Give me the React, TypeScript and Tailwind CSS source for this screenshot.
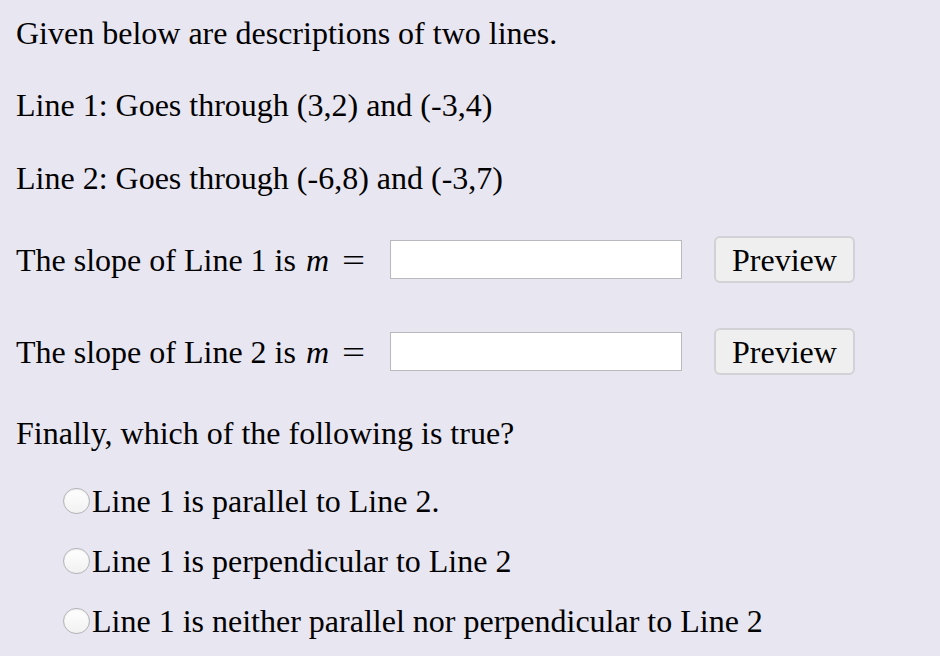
import React from "react";

const serif = { fontFamily: '"Liberation Serif", "Times New Roman", serif' };

function SlopeRow({ n, className }: { n: number; className?: string }) {
  return (
    <div className={"flex items-center h-[47px] " + (className ?? "")}>
      <div className="w-[374px] shrink-0 leading-[36px] whitespace-nowrap">
        The slope of Line {n} is <span className="italic ml-[2px]">m</span>
        <span className="inline-block ml-[13px] origin-left scale-x-[1.28]">=</span>
      </div>
      <input
        type="text"
        className="w-[292px] h-[39px] bg-white border border-[#b9b9c0] outline-none"
      />
      <button
        type="button"
        className="ml-[32px] w-[141px] h-[47px] rounded-[6px] border-2 border-[#d2d2d6] bg-[#efefef] text-[32px] leading-[36px] text-black"
        style={serif}
      >
        Preview
      </button>
    </div>
  );
}

function Option({ text, className }: { text: string; className?: string }) {
  return (
    <label className={"flex items-center h-[36px] pl-[47px] " + (className ?? "")}>
      <span className="w-[27px] h-[26px] rounded-full border border-[#b4b4b8] bg-gradient-to-b from-white to-[#f1f1f1] shadow-[inset_0_1px_2px_rgba(0,0,0,0.08)] shrink-0" />
      <span className="ml-[2px] leading-[36px] whitespace-nowrap">{text}</span>
    </label>
  );
}

export default function App() {
  return (
    <div
      className="w-[940px] h-[656px] bg-[#e8e6f1] text-black text-[32px] pl-[16px] pt-[15px] overflow-hidden"
      style={serif}
    >
      <div className="leading-[36px] h-[36px]">Given below are descriptions of two lines.</div>
      <div className="leading-[36px] h-[36px] mt-[36px]">Line 1: Goes through (3,2) and (-3,4)</div>
      <div className="leading-[36px] h-[36px] mt-[37px]">Line 2: Goes through (-6,8) and (-3,7)</div>
      <SlopeRow n={1} className="mt-[40px]" />
      <SlopeRow n={2} className="mt-[45px]" />
      <div className="leading-[36px] h-[36px] mt-[40px]">Finally, which of the following is true?</div>
      <Option text="Line 1 is parallel to Line 2." className="mt-[32px]" />
      <Option text="Line 1 is perpendicular to Line 2" className="mt-[24px]" />
      <Option text="Line 1 is neither parallel nor perpendicular to Line 2" className="mt-[24px]" />
    </div>
  );
}
